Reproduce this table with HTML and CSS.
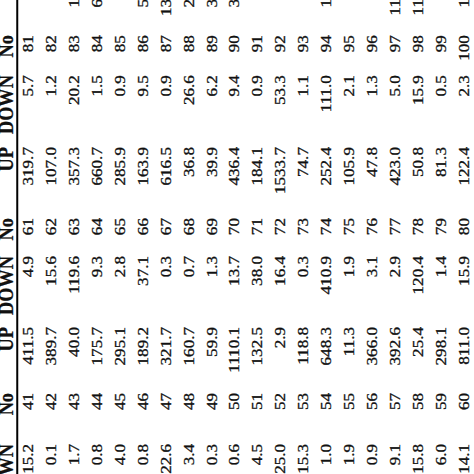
FILE: index.html
```html
<!DOCTYPE html>
<html>
<head>
<meta charset="utf-8">
<link rel="stylesheet" href="styles.css">
</head>
<body>
<div class="viewport">
  <div class="sheet">
    <div class="grid head">
      <div><span>DOWN</span></div><div><span>No</span></div><div><span>UP</span></div><div><span>DOWN</span></div><div><span>No</span></div><div><span>UP</span></div><div><span>DOWN</span></div><div><span>No</span></div><div><span>UP</span></div>
    </div>
    <div class="grid rows">
      <div>415.2</div><div>41</div><div>411.5</div><div>4.9</div><div>61</div><div>319.7</div><div>5.7</div><div>81</div><div>58.4</div>
      <div>0.1</div><div>42</div><div>389.7</div><div>15.6</div><div>62</div><div>107.0</div><div>1.2</div><div>82</div><div>23.1</div>
      <div>1.7</div><div>43</div><div>40.0</div><div>119.6</div><div>63</div><div>357.3</div><div>20.2</div><div>83</div><div>147.2</div>
      <div>0.8</div><div>44</div><div>175.7</div><div>9.3</div><div>64</div><div>660.7</div><div>1.5</div><div>84</div><div>632.5</div>
      <div>4.0</div><div>45</div><div>295.1</div><div>2.8</div><div>65</div><div>285.9</div><div>0.9</div><div>85</div><div>71.9</div>
      <div>0.8</div><div>46</div><div>189.2</div><div>37.1</div><div>66</div><div>163.9</div><div>9.5</div><div>86</div><div>548.0</div>
      <div>22.6</div><div>47</div><div>321.7</div><div>0.3</div><div>67</div><div>616.5</div><div>0.9</div><div>87</div><div>1364.8</div>
      <div>3.4</div><div>48</div><div>160.7</div><div>0.7</div><div>68</div><div>36.8</div><div>26.6</div><div>88</div><div>271.3</div>
      <div>0.3</div><div>49</div><div>59.9</div><div>1.3</div><div>69</div><div>39.9</div><div>6.2</div><div>89</div><div>305.6</div>
      <div>0.6</div><div>50</div><div>1110.1</div><div>13.7</div><div>70</div><div>436.4</div><div>9.4</div><div>90</div><div>348.9</div>
      <div>4.5</div><div>51</div><div>132.5</div><div>38.0</div><div>71</div><div>184.1</div><div>0.9</div><div>91</div><div>64.2</div>
      <div>25.0</div><div>52</div><div>2.9</div><div>16.4</div><div>72</div><div>1533.7</div><div>53.3</div><div>92</div><div>88.7</div>
      <div>15.3</div><div>53</div><div>118.8</div><div>0.3</div><div>73</div><div>74.7</div><div>1.1</div><div>93</div><div>19.5</div>
      <div>1.0</div><div>54</div><div>648.3</div><div>410.9</div><div>74</div><div>252.4</div><div>111.0</div><div>94</div><div>126.1</div>
      <div>1.9</div><div>55</div><div>11.3</div><div>1.9</div><div>75</div><div>105.9</div><div>2.1</div><div>95</div><div>42.3</div>
      <div>0.9</div><div>56</div><div>366.0</div><div>3.1</div><div>76</div><div>47.8</div><div>1.3</div><div>96</div><div>77.0</div>
      <div>9.1</div><div>57</div><div>392.6</div><div>2.9</div><div>77</div><div>423.0</div><div>5.0</div><div>97</div><div>1152.6</div>
      <div>215.8</div><div>58</div><div>25.4</div><div>120.4</div><div>78</div><div>50.8</div><div>15.9</div><div>98</div><div>1189.4</div>
      <div>6.0</div><div>59</div><div>298.1</div><div>1.4</div><div>79</div><div>81.3</div><div>0.5</div><div>99</div><div>36.2</div>
      <div>14.1</div><div>60</div><div>811.0</div><div>15.9</div><div>80</div><div>122.4</div><div>2.3</div><div>100</div><div>164.8</div>
    </div>
  </div>
</div>
</body>
</html>
```
FILE: styles.css
```css
html, body {
  margin: 0;
  padding: 0;
  background: #ffffff;
  overflow: hidden;
}

.viewport {
  width: 474px;
  height: 474px;
  overflow: hidden;
  display: flex;
  justify-content: center;
  align-items: center;
}

.sheet {
  flex: none;
  width: 388.5px;
  height: 474px;
  transform: rotate(-90deg) scale(1.22, 1);
  font-family: "Liberation Serif", "Times New Roman", serif;
  color: #111111;
}

.grid {
  display: grid;
  grid-template-columns: 64.6px 41.8px 54.1px 58.2px 31.1px 58.2px 59px 32.8px 54.1px;
  width: 453.9px;
  margin-left: -40px;
}

.grid > div {
  text-align: right;
  white-space: nowrap;
}

.head {
  height: 16px;
  font-size: 15px;
  line-height: 16px;
  font-weight: bold;
  border-bottom: 2px solid #000000;
}

.head span {
  display: inline-block;
  transform: scaleY(1.35);
  transform-origin: right 13.1px;
  -webkit-text-stroke: 0.2px #111111;
}

.rows {
  font-size: 14px;
  grid-auto-rows: 22.95px;
  line-height: 22.95px;
  -webkit-text-stroke: 0.3px #111111;
}
```
